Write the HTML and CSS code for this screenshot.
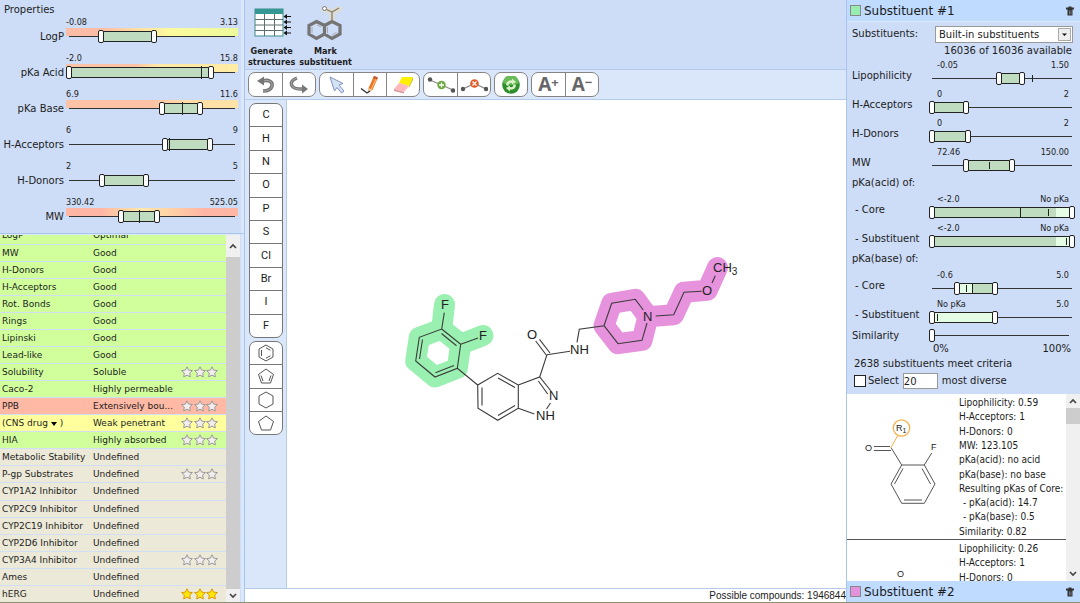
FILE: index.html
```html
<!DOCTYPE html>
<html lang="en">
<head>
<meta charset="utf-8">
<title>Structure Design</title>
<link rel="stylesheet" href="styles.css">
</head>
<body>
<svg class="defs" aria-hidden="true">
  <symbol id="star" viewBox="0 0 12 12"><path d="M6 .8 7.6 4.1 11.4 4.6 8.7 7.1 9.3 10.9 6 9.2 2.7 10.9 3.3 7.1.6 4.6 4.4 4.1Z"/></symbol>
  <symbol id="stars" viewBox="0 0 38 12"><use href="#star" width="12" height="12"/><use href="#star" x="13" width="12" height="12"/><use href="#star" x="25" width="12" height="12"/></symbol>
  <symbol id="up" viewBox="0 0 8 6"><path d="M1 5 4 2 7 5" fill="none" stroke="#444" stroke-width="1.6"/></symbol>
  <symbol id="down" viewBox="0 0 8 6"><path d="M1 1 4 4 7 1" fill="none" stroke="#444" stroke-width="1.6"/></symbol>
  <symbol id="trash" viewBox="0 0 8 10"><path d="M0 1.500H2.500V.5H5.500V1.500H8V3.500H0ZM1.500 3.500H6.500V9.500H1.500Z" fill="#333"/><path d="M3.500 4.500V8.500M5 4.500V8.500" stroke="#8a95a8" stroke-width=".7"/></symbol>
</svg>
<div class="app">
  <aside class="left">
    <section class="properties">
      <h2 class="title">Properties</h2>
      <div class="prop"><label for="p1">LogP</label><div class="ends"><span>-0.08</span><span>3.13</span></div>
        <div class="range band-logp"><div class="track"><i class="fill" style="--lo:19;--hi:51.4"></i></div><input id="p1" type="range" value="19" step="any"><input type="range" value="51.4" step="any" aria-label="LogP maximum"></div></div>
      <div class="prop"><label for="p2">pKa Acid</label><div class="ends"><span>-2.0</span><span>15.8</span></div>
        <div class="range band-acid"><div class="track"><i class="fill" style="--lo:0;--hi:85.8"></i><i class="tick tall" style="--at:79.8"></i></div><input id="p2" type="range" value="0" step="any"><input type="range" value="85.8" step="any" aria-label="pKa Acid maximum"></div></div>
      <div class="prop"><label for="p3">pKa Base</label><div class="ends"><span>6.9</span><span>11.6</span></div>
        <div class="range band-base"><div class="track"><i class="fill" style="--lo:56.2;--hi:78.8"></i><i class="tick tall" style="--at:67.8"></i></div><input id="p3" type="range" value="56.2" step="any"><input type="range" value="78.8" step="any" aria-label="pKa Base maximum"></div></div>
      <div class="prop"><label for="p4">H-Acceptors</label><div class="ends"><span>6</span><span>9</span></div>
        <div class="range"><div class="track"><i class="fill" style="--lo:57.8;--hi:84.8"></i><i class="tick tall" style="--at:60"></i></div><input id="p4" type="range" value="57.8" step="any"><input type="range" value="84.8" step="any" aria-label="H-Acceptors maximum"></div></div>
      <div class="prop"><label for="p5">H-Donors</label><div class="ends"><span>2</span><span>5</span></div>
        <div class="range"><div class="track"><i class="fill" style="--lo:20;--hi:46.4"></i></div><input id="p5" type="range" value="20" step="any"><input type="range" value="46.4" step="any" aria-label="H-Donors maximum"></div></div>
      <div class="prop"><label for="p6">MW</label><div class="ends"><span>330.42</span><span>525.05</span></div>
        <div class="range band-mw"><div class="track"><i class="fill" style="--lo:31.2;--hi:53"></i><i class="tick tall" style="--at:42.4"></i></div><input id="p6" type="range" value="31.2" step="any"><input type="range" value="53" step="any" aria-label="MW maximum"></div></div>
    </section>
    <section class="results">
      <div class="viewport">
        <table class="grades">
          <tbody>
            <tr class="good"><td class="name">LogP</td><td>Optimal</td><td class="rate"></td></tr>
            <tr class="good"><td>MW</td><td>Good</td><td></td></tr>
            <tr class="good"><td>H-Donors</td><td>Good</td><td></td></tr>
            <tr class="good"><td>H-Acceptors</td><td>Good</td><td></td></tr>
            <tr class="good"><td>Rot. Bonds</td><td>Good</td><td></td></tr>
            <tr class="good"><td>Rings</td><td>Good</td><td></td></tr>
            <tr class="good"><td>Lipinski</td><td>Good</td><td></td></tr>
            <tr class="good"><td>Lead-like</td><td>Good</td><td></td></tr>
            <tr class="good"><td>Solubility</td><td>Soluble</td><td><svg class="stars"><use href="#stars"/></svg></td></tr>
            <tr class="good"><td>Caco-2</td><td colspan="2">Highly permeable</td></tr>
            <tr class="bad"><td>PPB</td><td>Extensively bou...</td><td><svg class="stars"><use href="#stars"/></svg></td></tr>
            <tr class="fair"><td><button class="drug">(CNS drug <svg class="caret" viewBox="0 0 6 4"><path d="M0 0H6L3 4Z"/></svg> )</button></td><td>Weak penetrant</td><td><svg class="stars"><use href="#stars"/></svg></td></tr>
            <tr class="good"><td>HIA</td><td>Highly absorbed</td><td><svg class="stars"><use href="#stars"/></svg></td></tr>
            <tr><td>Metabolic Stability</td><td>Undefined</td><td></td></tr>
            <tr><td>P-gp Substrates</td><td>Undefined</td><td><svg class="stars"><use href="#stars"/></svg></td></tr>
            <tr><td>CYP1A2 Inhibitor</td><td>Undefined</td><td></td></tr>
            <tr><td>CYP2C9 Inhibitor</td><td>Undefined</td><td></td></tr>
            <tr><td>CYP2C19 Inhibitor</td><td>Undefined</td><td></td></tr>
            <tr><td>CYP2D6 Inhibitor</td><td>Undefined</td><td></td></tr>
            <tr><td>CYP3A4 Inhibitor</td><td>Undefined</td><td><svg class="stars"><use href="#stars"/></svg></td></tr>
            <tr><td>Ames</td><td>Undefined</td><td></td></tr>
            <tr><td>hERG</td><td>Undefined</td><td><svg class="stars gold"><use href="#stars"/></svg></td></tr>
          </tbody>
        </table>
      </div>
      <div class="scroll">
        <button aria-label="Scroll up"><svg><use href="#up"/></svg></button><i class="grip grip-long"></i><button aria-label="Scroll down"><svg><use href="#down"/></svg></button>
      </div>
    </section>
  </aside>

  <main class="center">
    <nav class="ribbon">
      <button class="big"><svg viewBox="0 0 38 36"><rect x="2" y="4" width="28" height="27" fill="#fff" stroke="#3a8d8b"/><rect x="2" y="4" width="28" height="5" fill="#359793"/><path d="M2 14.500H30M2 20H30M2 25.500H30M11.500 9V31M21.500 9V31" stroke="#5d6f70" fill="none"/><path d="M32 11.500H38M32 17H38M32 22.500H38M32 28H38" stroke="#111"/><path d="M30.500 11.500 34 9V14ZM30.500 17 34 14.500V19.500ZM30.500 22.500 34 20V25ZM30.500 28 34 25.500V30.500Z" fill="#111"/></svg>Generate<br>structures</button>
      <button class="big"><svg viewBox="0 0 38 36"><path d="M17 4 25 7 32 4M25 7V16" stroke="#dddcd5" stroke-width="6" fill="none" stroke-linecap="round" stroke-linejoin="round"/><path d="M9.500 16.500 17.500 20.500V29L9.500 33.500 2 29V20.500ZM17.500 20.500 25 16.500 33 20.500V29L25 33.500 17.500 29Z" stroke="#747474" stroke-width="3.200" fill="none"/><path d="M5 22V28M10 20 14 22M20.500 22V28M25 30 29.500 27.500" stroke="#aaa" fill="none"/><circle cx="17.500" cy="3.500" r="2" fill="#fff" stroke="#777"/><path d="M19.500 4.500 25 7 32 3M25 7V16" stroke="#8a7d6d" stroke-width="1.300" fill="none"/></svg>Mark<br>substituent</button>
    </nav>
    <div class="toolbar">
      <div class="group">
        <button aria-label="Undo"><svg viewBox="0 0 20 18"><path d="M6 5C13 3 17 6 16 10 15 14 11 15 7 15" fill="none" stroke="#777" stroke-width="3.600"/><path d="M6 5C13 3 17 6 16 10 15 14 11 15 7 15" fill="none" stroke="#aaa" stroke-width="1"/><path d="M8 .5 1 5 8 9.500Z" fill="#777"/></svg></button>
        <button aria-label="Redo"><svg viewBox="0 0 20 18"><path d="M8 2C2 4 1 8 4 11 7 13.500 11 13 14 13" fill="none" stroke="#777" stroke-width="3.400"/><path d="M8 2C2 4 1 8 4 11 7 13.500 11 13 14 13" fill="none" stroke="#aaa" stroke-width="1"/><path d="M13 8.500 19 13 13 17.500Z" fill="#777"/></svg></button>
      </div>
      <div class="group">
        <button aria-label="Select"><svg viewBox="0 0 20 18"><path d="M3 1 16 7.500 12 9 17 15 14.500 17 10 11.500 7.500 15Z" fill="#d5e2f5" stroke="#8092bd"/></svg></button>
        <button aria-label="Draw"><svg viewBox="0 0 20 18"><path d="M14 0 18 1.500 12.500 14 8 16.500 8.500 12Z" fill="#ed7928"/><path d="M14 0 18 1.500 17 3.500 13 2Z" fill="#c65b35"/><path d="M16 3 11 14" stroke="#ffc087"/><path d="M8.500 12 12.500 14 8 16.500Z" fill="#f4d0a0"/><path d="M1 12.500 7 17 10 15" stroke="#333" stroke-width="1.400" fill="none"/></svg></button>
        <button aria-label="Erase"><svg viewBox="0 0 20 18"><path d="M9 1H20L16 10 6 7Z" fill="#fff000"/><path d="M20 1 16 10 16 12 20 4Z" fill="#d7c322"/><path d="M6 7 16 10 11 16 1 13Z" fill="#ffb9bd"/><path d="M1 13 11 16V17.500L1 15Z" fill="#dc979d"/></svg></button>
      </div>
      <div class="group">
        <button aria-label="Add atom"><svg class="wide" viewBox="0 0 28 18"><path d="M3 4 26 14" stroke="#888" stroke-width="1.300"/><circle cx="3" cy="3.500" r="2.200" fill="#555"/><circle cx="26" cy="14.500" r="2.200" fill="#555"/><circle cx="14.500" cy="9" r="4.200" fill="#68a93a"/><path d="M12 9H17M14.500 6.500V11.500" stroke="#fff" stroke-width="1.300"/></svg></button>
        <button aria-label="Remove atom"><svg class="wide" viewBox="0 0 28 18"><path d="M3 13 14.500 7.500 26 13" stroke="#888" stroke-width="1.300" fill="none"/><circle cx="3" cy="13" r="2.200" fill="#555"/><circle cx="26" cy="13" r="2.200" fill="#555"/><circle cx="14.500" cy="7.500" r="4.300" fill="#e45a27"/><path d="M12.500 5.500 16.500 9.500M16.500 5.500 12.500 9.500" stroke="#fff" stroke-width="1.200"/></svg></button>
      </div>
      <div class="group">
        <button aria-label="Clean structure"><svg viewBox="0 0 20 18"><circle cx="10" cy="9" r="8.800" fill="#2e8f2c"/><path d="M2 7A8 8 0 0 1 18 7C13 10 7 9 2 7Z" fill="#68bb58"/><path d="M5 9C5 5.500 8 3.800 11 4.500V2.500L15 6 11 8.500V7C8.500 6.500 7.500 7.500 7.500 10ZM15 9C15 12.500 12 14.200 9 13.500V15.500L5 12 9 9.500V11C11.500 11.500 12.500 10.500 12.500 8Z" fill="#d9f2c5"/></svg></button>
      </div>
      <div class="group">
        <button class="letter" aria-label="Larger text">A<span class="sign">+</span></button>
        <button class="letter" aria-label="Smaller text">A<span class="sign">−</span></button>
      </div>
    </div>
    <div class="work">
      <div class="palette">
        <div class="column atoms"><button>C</button><button>H</button><button>N</button><button>O</button><button>P</button><button>S</button><button>Cl</button><button>Br</button><button>I</button><button>F</button></div>
        <div class="column rings">
          <button aria-label="Benzene"><svg viewBox="0 0 18 18"><path d="M9 1 16 5V13L9 17 2 13V5ZM4.500 6V12M9 3.800 13.500 6.300M9 14.200 13.500 11.700"/></svg></button>
          <button aria-label="Cyclopentadiene"><svg viewBox="0 0 18 18"><path d="M9 2 16.500 7.500 13.500 16H4.500L1.500 7.500ZM4 8.500 6 14M14 8.500 12 14"/></svg></button>
          <button aria-label="Cyclohexane"><svg viewBox="0 0 18 18"><path d="M9 1 16 5V13L9 17 2 13V5Z"/></svg></button>
          <button aria-label="Cyclopentane"><svg viewBox="0 0 18 18"><path d="M9 2 16.500 7.500 13.500 16H4.500L1.500 7.500Z"/></svg></button>
        </div>
      </div>
      <div class="canvas">
        <svg class="molecule" viewBox="287 100 559 488" role="img" aria-label="Structure">
          <g fill="none" stroke="#9af0b0" stroke-width="21" stroke-linecap="round" stroke-linejoin="round">
            <path d="M441.700 329 460.700 344.300 457.300 368.300 435 377 415.700 361 419.300 337.300ZM441.700 329 444.500 304.500M460.700 344.300 483 335.500"/></g>
          <g fill="none" stroke="#e692dc" stroke-width="21" stroke-linecap="round" stroke-linejoin="round">
            <path d="M604 325.700 611.700 303.300 635.300 299.300 648 316.700 642 340.300 618 343.700ZM648 316.700 673.700 314.700 684 292.300 707.300 290.300 717.500 267.500"/></g>
          <path fill="none" stroke="#3b3b3b" stroke-width="1.100" d="M441.700 329 460.700 344.300 457.300 368.300 435 377 415.700 361 419.300 337.300ZM441.500 333.500 456.500 345.700M454 365.500 435.500 372.700M419.500 359 422.500 339.500M441.700 329 444.300 312.700M460.700 344.300 478 338M457.300 368.300 477.700 385 497.700 373.300 518.300 385V408.300L497.700 420.300 478 408.300 477.700 385M482 387.500V405.500M498 378 515 387.500M515 405.500 498 415.500M518.300 385 539.700 377 551 391M538.300 381 547.700 394M550.500 403 546.500 409M518.300 408.300 534.300 414M539.700 377 547 354.700M547 356 535.700 341M550 353 539.500 339.300M547 354.700 570 351.300M577 342.300 579.300 329.300 604 325.700 611.700 303.300 635.300 299.300 643.300 310M604 325.700 618 343.700 642 340.300 647 323M655.700 316 673.700 314.700 684 292.300 701.700 291.300M712 283 715.300 275.700"/>
          <g class="atom"><text x="441" y="309">F</text><text x="479" y="340">F</text><text x="527" y="339">O</text><text x="549" y="400">N</text><text x="536" y="420">NH</text><text x="570" y="354">NH</text><text x="643" y="321">N</text><text x="702" y="295">O</text><text x="713" y="272">CH<tspan class="sub" dy="3">3</tspan></text></g>
        </svg>
      </div>
    </div>
    <footer class="status">Possible compounds: 1946844</footer>
  </main>

  <aside class="right">
    <h2 class="head"><i class="chip green"></i>Substituent #1<button aria-label="Delete substituent 1"><svg><use href="#trash"/></svg></button></h2>
    <form class="filters">
      <div class="pick"><label for="src">Substituents:</label><div class="combo"><select id="src"><option>Built-in substituents</option></select><svg class="drop" viewBox="0 0 13 13"><rect x=".5" y=".5" width="12" height="12" fill="#eee" stroke="#aaa"/><path d="M4 5.500H9L6.500 8Z" fill="#111"/></svg></div></div>
      <p class="avail">16036 of 16036 available</p>
      <div class="filter"><label for="f1">Lipophilicity</label><div class="ends"><span>-0.05</span><span>1.50</span></div>
        <div class="range"><div class="track"><i class="fill" style="--lo:47.8;--hi:64.6"></i><i class="tick" style="--at:71.5"></i></div><input id="f1" type="range" value="47.8" step="any"><input type="range" value="64.6" step="any" aria-label="Lipophilicity maximum"></div></div>
      <div class="filter"><label for="f2">H-Acceptors</label><div class="ends"><span>0</span><span>2</span></div>
        <div class="range"><div class="track"><i class="fill" style="--lo:0;--hi:24"></i></div><input id="f2" type="range" value="0" step="any"><input type="range" value="24" step="any" aria-label="H-Acceptors maximum"></div></div>
      <div class="filter"><label for="f3">H-Donors</label><div class="ends"><span>0</span><span>2</span></div>
        <div class="range"><div class="track"><i class="fill" style="--lo:0;--hi:25.8"></i></div><input id="f3" type="range" value="0" step="any"><input type="range" value="25.8" step="any" aria-label="H-Donors maximum"></div></div>
      <div class="filter"><label for="f4">MW</label><div class="ends"><span>72.46</span><span>150.00</span></div>
        <div class="range"><div class="track"><i class="fill" style="--lo:24.6;--hi:57"></i><i class="tick" style="--at:40.7"></i></div><input id="f4" type="range" value="24.6" step="any"><input type="range" value="57" step="any" aria-label="MW maximum"></div></div>
      <h3 class="sub-head">pKa(acid) of:</h3>
      <div class="filter nested"><label for="f5">- Core</label><div class="ends"><span>&lt;-2.0</span><span>No pKa</span></div>
        <div class="range"><div class="track"><i class="fill" style="--lo:0;--hi:100"></i><i class="fill pale" style="--lo:88.5;--hi:100"></i><i class="tick edge" style="--at:63"></i><i class="tick" style="--at:83"></i></div><input id="f5" type="range" value="0" step="any"><input type="range" value="100" step="any" aria-label="Acid core maximum"></div></div>
      <div class="filter nested"><label for="f6">- Substituent</label><div class="ends"><span>&lt;-2.0</span><span>No pKa</span></div>
        <div class="range"><div class="track"><i class="fill" style="--lo:0;--hi:100"></i><i class="fill pale" style="--lo:88.5;--hi:100"></i><i class="tick" style="--at:96"></i></div><input id="f6" type="range" value="0" step="any"><input type="range" value="100" step="any" aria-label="Acid substituent maximum"></div></div>
      <h3 class="sub-head">pKa(base) of:</h3>
      <div class="filter nested"><label for="f7">- Core</label><div class="ends"><span>-0.6</span><span>5.0</span></div>
        <div class="range"><div class="track"><i class="fill" style="--lo:17.5;--hi:45.2"></i><i class="fill pale" style="--lo:17.5;--hi:28.7"></i><i class="tick edge" style="--at:28.7"></i><i class="tick" style="--at:24.2"></i></div><input id="f7" type="range" value="17.5" step="any"><input type="range" value="45.2" step="any" aria-label="Base core maximum"></div></div>
      <div class="filter nested"><label for="f8">- Substituent</label><div class="ends"><span>No pKa</span><span>5.0</span></div>
        <div class="range"><div class="track"><i class="fill pale" style="--lo:0;--hi:45.2"></i><i class="tick" style="--at:3.3"></i></div><input id="f8" type="range" value="0" step="any"><input type="range" value="45.2" step="any" aria-label="Base substituent maximum"></div></div>
      <div class="filter similarity"><label for="f9">Similarity</label>
        <div class="range"><div class="track"></div><input id="f9" type="range" value="0" step="any"></div><div class="ends percent"><span>0%</span><span>100%</span></div></div>
      <p class="count">2638 substituents meet criteria</p>
      <div class="diverse"><label class="check"><input type="checkbox">Select</label><input id="num" class="num" type="text" value="20"><label for="num">most diverse</label></div>
    </form>
    <section class="matches">
      <div class="list">
        <article class="match">
          <svg class="drawing" viewBox="847 395 107 145" role="img" aria-label="2-fluorobenzoyl substituent">
            <path d="M874 447.500H890M874 451.500H891M891 448.500 901.700 466 924.300 466 935 485 924.300 504.300 901.700 504.300 891 485 901.700 466M924.300 466 931.700 454M903 469.500 894.500 485M922 469.500 930.500 485M904 501H922" fill="none" stroke="#555"/>
            <path d="M891 448.500 897.700 436.700" stroke="#f6b04a"/><circle cx="901.500" cy="429" r="8.200" fill="#fff" stroke="#f6b04a" stroke-width="1.300"/>
            <g class="small-atom"><text x="896" y="432">R<tspan class="tiny" dy="2">1</tspan></text><text x="865" y="452">O</text><text x="931" y="451">F</text></g>
          </svg>
          <ul class="facts"><li>Lipophilicity: 0.59</li><li>H-Acceptors: 1</li><li>H-Donors: 0</li><li>MW: 123.105</li><li>pKa(acid): no acid</li><li>pKa(base): no base</li><li>Resulting pKas of Core:</li><li class="in">- pKa(acid): 14.7</li><li class="in">- pKa(base): 0.5</li><li>Similarity: 0.82</li></ul>
        </article>
        <article class="match">
          <svg class="drawing" viewBox="847 541 107 145" role="img" aria-label="Substituent"><g class="small-atom"><text x="897" y="578">O</text></g></svg>
          <ul class="facts"><li>Lipophilicity: 0.26</li><li>H-Acceptors: 1</li><li>H-Donors: 0</li></ul>
        </article>
      </div>
      <div class="scroll">
        <button aria-label="Scroll up"><svg><use href="#up"/></svg></button><i class="grip"></i><button class="last" aria-label="Scroll down"><svg><use href="#down"/></svg></button>
      </div>
    </section>
    <h2 class="head"><i class="chip pink"></i>Substituent #2<button aria-label="Delete substituent 2"><svg><use href="#trash"/></svg></button></h2>
  </aside>
</div>
</body>
</html>
```
FILE: styles.css
```css
* { box-sizing: border-box; }
body { margin: 0; background: #cdddf7; color: #1c1c1c; font: 10px/14px "DejaVu Sans", sans-serif; }
button, input, select { font: inherit; color: inherit; margin: 0; padding: 0; }
button { border: 0; background: none; }
h2, h3, p, ul { margin: 0; padding: 0; font-size: 10px; font-weight: normal; list-style: none; }
svg { display: block; }
.defs { position: absolute; width: 0; height: 0; }
.app { display: grid; grid-template-columns: 245px minmax(0, 1fr) 234px; height: 100vh; border-bottom: 1px solid #8d8f72; overflow: hidden; }

/* range sliders with two thumbs */
.range { display: grid; height: 13px; align-items: center; }
.range > * { grid-area: 1 / 1; }
.track { position: relative; height: 11px; margin: 0 3px; background: linear-gradient(#333, #333) center / 100% 1px no-repeat; }
.fill { position: absolute; top: 0; bottom: 0; left: calc(var(--lo) * 1%); width: calc((var(--hi) - var(--lo)) * 1%); background: #bfdcc0; border: solid #222; border-width: 1px 0; }
.fill.pale { background: #e5fce5; }
.tick { position: absolute; top: 2px; bottom: 2px; left: calc(var(--at) * 1%); width: 1px; background: #222; }
.tick.tall { top: -1px; bottom: -1px; }
.tick.edge { top: 0; bottom: 0; }
.range input { appearance: none; width: 100%; height: 13px; background: none; pointer-events: none; z-index: 1; }
.range input::-webkit-slider-thumb { appearance: none; width: 6px; height: 13px; background: #fff; border: 1px solid #222; border-radius: 2px; pointer-events: auto; }
.ends { display: flex; justify-content: space-between; font: 9px/15px "DejaVu Sans Condensed", "DejaVu Sans", sans-serif; }

/* left side */
.left { display: flex; flex-direction: column; min-height: 0; border-right: 1px solid #abc4ec; box-shadow: inset -3px 0 #dbe7fa; }
.properties { padding: 0 6px 2px 0; border-bottom: 1px solid #abc4ec; }
.title { padding: 3px 0 0 4px; line-height: 14px; margin-bottom: -2px; }
.prop { display: grid; grid-template-columns: 64px 1fr; column-gap: 2px; grid-template-rows: 13px 23px; }
.prop label { grid-row: 2; grid-column: 1; text-align: right; line-height: 18px; }
.prop .ends { grid-column: 2; grid-row: 1; }
.prop .range { grid-column: 2; grid-row: 2; height: 17px; background: 0 0 / 100% 8px no-repeat; }
.band-logp { background-image: linear-gradient(90deg, #fcbca6 20%, #fdfa9e 60%, #ecfa9b) !important; }
.band-acid { background-image: linear-gradient(90deg, #fec2a6 40%, #ffe7a4 52%, #ffeca5) !important; }
.band-base { background-image: linear-gradient(90deg, #fec2a6 50%, #ffdda5 70%, #ffe3a7) !important; }
.band-mw { background-image: linear-gradient(90deg, #ffb6a5 20%, #ffe9a8 44%, #ffb6a5 80%) !important; }
.results { display: flex; flex: 1; min-height: 0; margin-right: 4px; border-top: 1px solid #dbe7fa; }
.viewport { flex: 1; overflow: hidden; }
.grades { width: 100%; height: 376px; margin-top: -8px; border-collapse: collapse; table-layout: fixed; font-size: 9px; line-height: 16px; background: #ece9d8; }
.grades td { padding: 0 0 0 2px; height: 17px; border-bottom: 1px solid #cfdff6; white-space: nowrap; overflow: hidden; }
.name { width: 91px; }
.rate { width: 47px; }
.good { background: #d1ff9c; }
.bad { background: #ffb9a5; }
.fair { background: #ffff9e; }
.caret { display: inline-block; width: 6px; height: 4px; vertical-align: middle; }
.stars { width: 38px; height: 12px; fill: #f1eeee; stroke: #9d9799; }
.stars.gold { fill: #ffe70b; stroke: #dd9a07; }
.scroll { display: flex; flex-direction: column; width: 14px; background: #f0f0f0; }
.scroll button { display: grid; place-items: center; width: 14px; height: 14px; }
.scroll button svg { width: 8px; height: 6px; }
.scroll .last { margin-top: auto; }
.grip { height: 16px; background: #cdcdcd; }
.left .scroll button:first-child { height: 22px; }
.grip-long { flex: 1; }

/* drawing area */
.center { display: flex; flex-direction: column; min-width: 0; background: #fff; }
.ribbon { display: flex; height: 70px; padding: 5px 3px 0; gap: 4px; background: #cdddf7; border-bottom: 1px solid #b5cbec; }
.big { display: flex; flex-direction: column; align-items: center; font: bold 9px/11px "DejaVu Sans Condensed", "DejaVu Sans", sans-serif; }
.big svg { width: 38px; height: 36px; margin-bottom: 5px; }
.toolbar { display: flex; gap: 3px; padding: 2px 3px; background: #dae7fa; border-bottom: 1px solid #b5cbec; }
.group { display: flex; border: 1px solid #858585; border-radius: 7px; background: #fff; overflow: hidden; }
.group button { display: grid; place-items: center; width: 33px; height: 23px; }
.group button + button { border-left: 1px solid #858585; }
.group button:only-child { width: 32px; }
.group svg { width: 20px; height: 18px; }
.group .wide { width: 28px; }
.group .letter { display: flex; justify-content: center; align-items: flex-start; font: bold 19px/23px "Open Sans", sans-serif; color: #666; }
.sign { font-size: 13px; line-height: 18px; }
.work { display: flex; flex: 1; min-height: 0; }
.palette { width: 42px; padding: 3px 3px 0 4px; background: #dae7fa; border-right: 1px solid #b5cbec; }
.column { display: flex; flex-direction: column; width: 34px; border: 1px solid #777; border-radius: 7px; background: #fff; overflow: hidden; margin-bottom: 3px; }
.column button { display: grid; place-items: center; flex: 1; font: 11px/14px Roboto, sans-serif; }
.column button + button { border-top: 1px solid #777; }
.column svg { width: 18px; height: 18px; fill: none; stroke: #555; }
.atoms { height: 235px; }
.rings { height: 94px; }
.canvas { flex: 1; min-width: 0; }
.molecule { width: 100%; height: 100%; }
.atom { font: 13px "Liberation Sans", sans-serif; fill: #222; }
.sub { font-size: 10px; }
.status { border-top: 1px solid #b5cbec; line-height: 14px; text-align: right; font-family: "Liberation Sans", sans-serif; font-size: 10px; }

/* right side */
.right { display: flex; flex-direction: column; min-height: 0; border-left: 1px solid #abc4ec; }
.head { display: flex; align-items: center; gap: 3px; flex: none; height: 22px; padding: 0 6px 0 3px; background: #bfdbff; border-bottom: 1px solid #d9e7fb; font-size: 12px; }
.head button { margin-left: auto; }
.head svg { width: 8px; height: 10px; }
.chip { width: 11px; height: 11px; border: 1px solid #888; }
.green { background: #98eeb0; }
.pink { background: #e592dc; }
.filters { padding: 4px 5px 0; }
.pick { display: flex; justify-content: space-between; padding-right: 2px; }
.pick label { line-height: 16px; }
.combo { position: relative; width: 138px; }
.combo select { appearance: none; width: 100%; height: 17px; padding-left: 3px; background: #fff; border: 1px solid #999; border-radius: 0; }
.drop { position: absolute; right: 2px; top: 2px; width: 13px; height: 13px; pointer-events: none; }
.avail { text-align: right; padding: 1px 3px 0 0; }
.filter { display: grid; grid-template-columns: 77px 1fr; grid-template-rows: 14px 15px; }
.filter label { grid-area: 1 / 1 / 3 / 2; padding-top: 11px; }
.nested label { padding-left: 3px; }
.filter .ends { padding: 0 6px 0 8px; }
.filter .range, .filter .ends { grid-column: 2; }
.sub-head { line-height: 18px; }
.similarity { grid-template-rows: 14px 14px; margin-top: 3px; }
.similarity label { padding-top: 0; }
.similarity .track { margin-right: 6px; }
.similarity .percent { padding: 0 4px; font: 10px/12px "DejaVu Sans", sans-serif; }
.count { padding-left: 2px; }
.diverse { display: flex; align-items: center; gap: 4px; padding: 2px 0 5px 2px; }
.check { display: flex; align-items: center; gap: 2px; }
.check input { appearance: none; width: 12px; height: 12px; border: 1px solid #222; background: #fff; }
.num { width: 35px; height: 16px; border: 1px solid #999; background: #fff; }
.matches { display: flex; flex: 1; min-height: 0; background: #fff; }
.list { flex: 1; min-width: 0; overflow: hidden; }
.match { display: grid; grid-template-columns: 107px 1fr; border-bottom: 1px solid #555; }
.drawing { width: 107px; height: 145px; }
.facts { display: grid; grid-template-rows: repeat(10, 1fr); padding: 2px 0 0 5px; font-family: "DejaVu Sans Condensed", "DejaVu Sans", sans-serif; white-space: nowrap; }
.in { padding-left: 4px; }
.small-atom { font: 9px "Liberation Sans", sans-serif; fill: #222; }
.tiny { font-size: 7px; }
```
